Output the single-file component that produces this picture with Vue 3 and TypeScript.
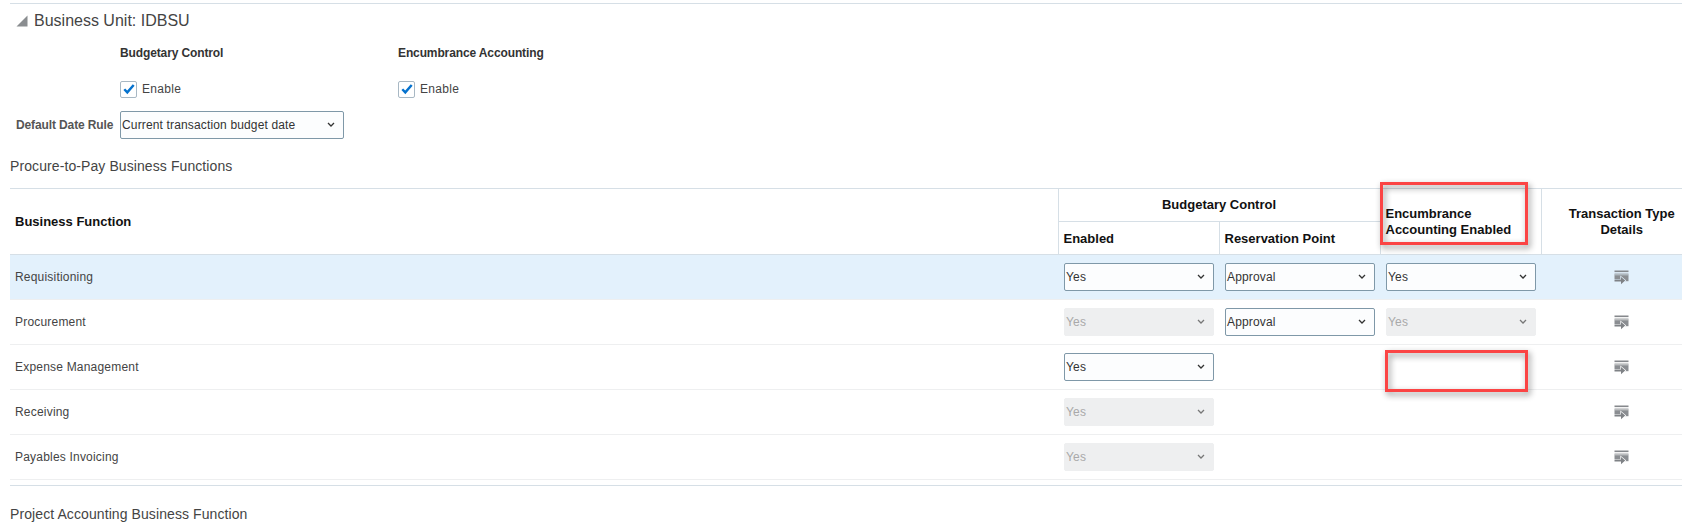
<script setup lang="ts">
interface Sel { value: string; disabled?: boolean }
interface Row { name: string; enabled: Sel; point?: Sel; enc?: Sel; selected?: boolean }

const rows: Row[] = [
  { name: 'Requisitioning', selected: true, enabled: { value: 'Yes' }, point: { value: 'Approval' }, enc: { value: 'Yes' } },
  { name: 'Procurement', enabled: { value: 'Yes', disabled: true }, point: { value: 'Approval' }, enc: { value: 'Yes', disabled: true } },
  { name: 'Expense Management', enabled: { value: 'Yes' } },
  { name: 'Receiving', enabled: { value: 'Yes', disabled: true } },
  { name: 'Payables Invoicing', enabled: { value: 'Yes', disabled: true } },
]
</script>

<template>
  <div class="page">
    <div class="rule-top"></div>
    <div class="unit-head">
      <svg class="tri" width="12" height="12" viewBox="0 0 12 12"><path d="M11.5 0.5V11.5H0.5Z" fill="#8a8d90" /></svg>
      <span>Business Unit: IDBSU</span>
    </div>

    <div class="form">
      <div class="form-head r1 c2">Budgetary Control</div>
      <div class="form-head r1 c3">Encumbrance Accounting</div>

      <label class="check r2 c2">
        <span class="box"><svg width="14" height="14" viewBox="0 0 14 14"><path d="M2.3 7.2l3 3.2 6.4-7.4" fill="none" stroke="#0572ce" stroke-width="2.4" /></svg></span>Enable
      </label>
      <label class="check r2 c3">
        <span class="box"><svg width="14" height="14" viewBox="0 0 14 14"><path d="M2.3 7.2l3 3.2 6.4-7.4" fill="none" stroke="#0572ce" stroke-width="2.4" /></svg></span>Enable
      </label>

      <div class="rule-label r3 c1">Default Date Rule</div>
      <div class="select wide r3 c2">
        <span>Current transaction budget date</span>
        <svg width="8" height="6" viewBox="0 0 8 6"><path d="M1 1l3 3 3-3" fill="none" stroke="#333" stroke-width="1.3" /></svg>
      </div>
    </div>

    <div class="section-title first">Procure-to-Pay Business Functions</div>

    <table class="grid">
      <colgroup>
        <col class="c-name" /><col class="c-n" /><col class="c-n" /><col class="c-n" /><col class="c-n" />
      </colgroup>
      <thead>
        <tr class="h1">
          <th rowspan="2" class="th-name">Business Function</th>
          <th colspan="2" class="th-center v group">Budgetary Control</th>
          <th rowspan="2" class="th-enc v">Encumbrance<br />Accounting Enabled</th>
          <th rowspan="2" class="th-center v two">Transaction Type<br />Details</th>
        </tr>
        <tr class="h2">
          <th class="v th-left">Enabled</th>
          <th class="v th-left">Reservation Point</th>
        </tr>
      </thead>
      <tbody>
        <tr v-for="r in rows" :key="r.name" :class="{ selected: r.selected }">
          <td class="name">{{ r.name }}</td>
          <td class="sel">
            <div class="select" :class="{ disabled: r.enabled.disabled }">
              <span>{{ r.enabled.value }}</span>
              <svg width="8" height="6" viewBox="0 0 8 6"><path d="M1 1l3 3 3-3" fill="none" :stroke="r.enabled.disabled ? '#777' : '#333'" stroke-width="1.3" /></svg>
            </div>
          </td>
          <td class="sel">
            <div v-if="r.point" class="select">
              <span>{{ r.point.value }}</span>
              <svg width="8" height="6" viewBox="0 0 8 6"><path d="M1 1l3 3 3-3" fill="none" stroke="#333" stroke-width="1.3" /></svg>
            </div>
          </td>
          <td class="sel">
            <div v-if="r.enc" class="select" :class="{ disabled: r.enc.disabled }">
              <span>{{ r.enc.value }}</span>
              <svg width="8" height="6" viewBox="0 0 8 6"><path d="M1 1l3 3 3-3" fill="none" :stroke="r.enc.disabled ? '#777' : '#333'" stroke-width="1.3" /></svg>
            </div>
          </td>
          <td class="icon-cell">
            <svg width="15" height="15" viewBox="0 0 15 15">
              <rect x="0.5" y="0.5" width="14" height="1.6" fill="#85888c" />
              <path d="M0.5 3.6H14.5V11.2H0.5Z" fill="#8b8e92" />
              <path d="M0.5 4.8H14.5" :stroke="r.selected ? '#e3f1fc' : '#fff'" stroke-width="0.6" />
              <path d="M0.5 9.6H7V7L11.2 10.6L7 14.2V11.6H0.5Z" fill="#7f8286" :stroke="r.selected ? '#e3f1fc' : '#fff'" stroke-width="1.3" paint-order="stroke" />
            </svg>
          </td>
        </tr>
      </tbody>
    </table>

    <div class="rule-bottom"></div>
    <div class="section-title last">Project Accounting Business Function</div>

    <div class="mark mark-a"></div>
    <div class="mark mark-b"></div>
  </div>
</template>

<style>
html, body { margin: 0; background: #fff; }
</style>

<style scoped>
.page {
  position: relative;
  width: 1682px;
  height: 526px;
  overflow: hidden;
  background: #fff;
  font-family: "Liberation Sans", Arial, sans-serif;
  color: #333;
  font-size: 12px;
  box-sizing: border-box;
  padding: 3px 0 0 10px;
}
.rule-top { height: 1px; background: #d6dfe6; }
.unit-head {
  display: flex;
  align-items: center;
  gap: 6px;
  margin: 7px 0 0 6px;
  height: 20px;
  font-size: 16px;
  color: #444;
}
.form {
  display: grid;
  grid-template-columns: 104px 278px 1fr;
  grid-template-rows: 18px 18px 18px 13px 28px;
  margin: 13px 0 0 6px;
  align-items: center;
}
.r1 { grid-row: 1; }
.r2 { grid-row: 3; }
.r3 { grid-row: 5; }
.c1 { grid-column: 1; }
.c2 { grid-column: 2; }
.c3 { grid-column: 3; }
.form-head { font-weight: 700; font-size: 12px; letter-spacing: -0.12px; }
.check { display: flex; align-items: center; gap: 5px; color: #444; letter-spacing: 0.3px; }
.box {
  width: 15px;
  height: 15px;
  border: 1px solid #a8b8c4;
  border-radius: 2px;
  background: #fff;
  display: flex;
  align-items: center;
  justify-content: center;
}
.rule-label { font-weight: 700; color: #555; white-space: nowrap; letter-spacing: -0.12px; }
.select {
  height: 28px;
  width: 150px;
  box-sizing: border-box;
  border: 1px solid #7f98a8;
  border-radius: 2px;
  background: #fcfdfe;
  padding: 0 8px 0 1px;
  display: flex;
  align-items: center;
  justify-content: space-between;
  color: #333;
  letter-spacing: 0.15px;
}
.select.wide { width: 224px; }
.select.disabled { background: #eeeff0; border-color: #eeeff0; color: #a9a9a9; }
.section-title { font-size: 14px; color: #444; letter-spacing: 0.09px; }
.first { margin-top: 19px; height: 16px; }
.grid {
  border-collapse: collapse;
  table-layout: fixed;
  width: 1692px;
  margin-top: 14px;
  border-top: 1px solid #d6dfe6;
}
.c-name { width: 1048px; }
.c-n { width: 161px; }
.grid th { font-size: 13px; color: #111; font-weight: 700; padding: 0; }
.h1 { height: 33px; }
.h2 { height: 33px; }
.th-name { text-align: left; padding-left: 5px !important; border-bottom: 1px solid #d6dfe6; }
.th-center { text-align: center; }
.group { padding-bottom: 2px !important; border-bottom: 1px solid #d6dfe6; }
.th-left { text-align: left; padding-left: 5px !important; }
.th-enc { text-align: left; padding-left: 5px !important; line-height: 16px; border-bottom: 1px solid #d6dfe6; }
.two { line-height: 16px; border-bottom: 1px solid #d6dfe6; }
.v { border-left: 1px solid #d6dfe6; }
.h2 th { border-bottom: 1px solid #d6dfe6; }
.grid tbody tr { height: 45px; }
.grid td { border-bottom: 1px solid #eeeff0; padding: 0; }
.selected { background: #e3f1fc; }
.name { padding-left: 5px !important; color: #444; letter-spacing: 0.2px; }
.sel { padding-left: 6px !important; }
.icon-cell { text-align: center; }
.icon-cell svg { display: block; margin: 0 auto; }
.rule-bottom { height: 1px; background: #d6dfe6; margin-top: 5px; }
.last { margin-top: 20px; }
.mark {
  position: absolute;
  box-sizing: border-box;
  border: 3px solid #fb4444;
  filter: drop-shadow(2px 3px 3px rgba(0, 0, 0, 0.45));
  pointer-events: none;
}
.mark-a { left: 1380px; top: 182px; width: 148px; height: 63px; }
.mark-b { left: 1385px; top: 350px; width: 143px; height: 42px; }
</style>
